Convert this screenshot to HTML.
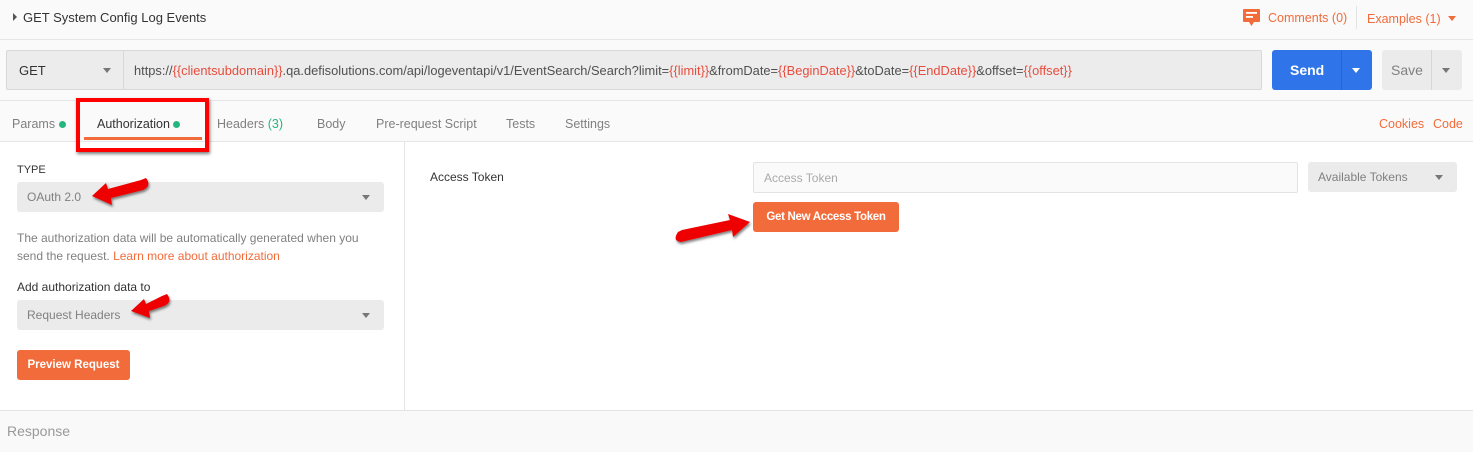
<!DOCTYPE html>
<html><head><style>
*{margin:0;padding:0;box-sizing:border-box}
body{width:1473px;height:452px;overflow:hidden;background:#fff;font-family:"Liberation Sans",sans-serif;font-size:12px;color:#505050;position:relative}
.a{position:absolute}
.or{color:#f26b3a}
.sel{background:#ebebeb;border-radius:3px;color:#808080}
.tri{width:0;height:0;border-left:4px solid transparent;border-right:4px solid transparent;border-top:5px solid #777;position:absolute}
.tab{position:absolute;top:117px;color:#808080;font-size:12.5px}
</style></head><body>
<div class="a" style="left:0;top:0;width:1473px;height:40px;background:#fafafa;border-bottom:1px solid #e6e6e6"></div>
<div class="a" style="left:13px;top:13px;width:0;height:0;border-top:4px solid transparent;border-bottom:4px solid transparent;border-left:4px solid #555"></div>
<div class="a" style="left:23px;top:10px;font-size:13px;color:#333">GET System Config Log Events</div>
<svg class="a" style="left:1243px;top:9px" width="17" height="18"><rect x="0" y="0" width="17" height="13" rx="1" fill="#f26b3a"/><path d="M6 13 L8.5 17 L11 13Z" fill="#f26b3a"/><rect x="3" y="3" width="11" height="1.8" fill="#fff"/><rect x="3" y="7" width="7" height="1.8" fill="#fff"/></svg>
<div class="a or" style="left:1268px;top:11px;font-size:12.5px">Comments (0)</div>
<div class="a" style="left:1356px;top:6px;width:1px;height:23px;background:#e3e3e3"></div>
<div class="a or" style="left:1367px;top:12px;font-size:12.5px">Examples (1)</div>
<div class="a" style="left:1448px;top:16px;border-left:4px solid transparent;border-right:4px solid transparent;border-top:5px solid #f26b3a"></div>

<div class="a" style="left:0;top:40px;width:1473px;height:61px;background:#fafafa;border-bottom:1px solid #e6e6e6"></div>
<div class="a" style="left:6px;top:50px;width:1256px;height:40px;background:#ececec;border:1px solid #d8d8d8;border-radius:2px"></div>
<div class="a" style="left:123px;top:51px;width:1px;height:38px;background:#d8d8d8"></div>
<div class="a" style="left:19px;top:63px;font-size:13px;color:#333">GET</div>
<div class="tri" style="left:103px;top:68px"></div>
<div class="a" style="left:134px;top:63px;color:#505050;font-size:12.85px">https://<span style="color:#e84c3d">{{clientsubdomain}}</span>.qa.defisolutions.com/api/logeventapi/v1/EventSearch/Search?limit=<span style="color:#e84c3d">{{limit}}</span>&amp;fromDate=<span style="color:#e84c3d">{{BeginDate}}</span>&amp;toDate=<span style="color:#e84c3d">{{EndDate}}</span>&amp;offset=<span style="color:#e84c3d">{{offset}}</span></div>
<div class="a" style="left:1272px;top:50px;width:100px;height:40px;background:#2f74e8;border-radius:3px"></div>
<div class="a" style="left:1341px;top:50px;width:1px;height:40px;background:#2766cf"></div>
<div class="a" style="left:1290px;top:62px;color:#fff;font-weight:bold;font-size:14px">Send</div>
<div class="a" style="left:1352px;top:68px;border-left:4px solid transparent;border-right:4px solid transparent;border-top:5px solid #fff"></div>
<div class="a" style="left:1382px;top:50px;width:80px;height:40px;background:#ebebeb;border-radius:3px"></div>
<div class="a" style="left:1431px;top:50px;width:1px;height:40px;background:#d6d6d6"></div>
<div class="a" style="left:1391px;top:62px;color:#808080;font-size:14px">Save</div>
<div class="tri" style="left:1442px;top:68px"></div>

<div class="a" style="left:0;top:101px;width:1473px;height:41px;background:#fafafa;border-bottom:1px solid #e6e6e6"></div>
<div class="tab" style="left:12px">Params <span style="display:inline-block;width:7px;height:7px;border-radius:50%;background:#26b47f"></span></div>
<div class="tab" style="left:97px;color:#333">Authorization <span style="display:inline-block;width:7px;height:7px;border-radius:50%;background:#26b47f"></span></div>
<div class="a" style="left:84px;top:137px;width:118px;height:3px;background:#f26b3a"></div>
<div class="tab" style="left:217px">Headers <span style="color:#26b47f">(3)</span></div>
<div class="tab" style="left:317px">Body</div>
<div class="tab" style="left:376px">Pre-request Script</div>
<div class="tab" style="left:506px">Tests</div>
<div class="tab" style="left:565px">Settings</div>
<div class="a or" style="left:1379px;top:117px;font-size:12.5px">Cookies</div>
<div class="a or" style="left:1433px;top:117px;font-size:12.5px">Code</div>
<div class="a" style="left:76px;top:98px;width:133px;height:54px;border:4px solid #ff0000;box-shadow:1px 2px 3px rgba(0,0,0,.5)"></div>

<div class="a" style="left:404px;top:142px;width:1px;height:268px;background:#e6e6e6"></div>
<div class="a" style="left:17px;top:164px;font-size:11px;color:#333">TYPE</div>
<div class="a sel" style="left:17px;top:182px;width:367px;height:30px"></div>
<div class="a" style="left:27px;top:190px;color:#808080">OAuth 2.0</div>
<div class="tri" style="left:362px;top:195px"></div>
<div class="a" style="left:17px;top:229px;line-height:18px;color:#808080;width:370px">The authorization data will be automatically generated when you send the request. <span class="or">Learn more about authorization</span></div>
<div class="a" style="left:17px;top:280px;color:#333">Add authorization data to</div>
<div class="a sel" style="left:17px;top:300px;width:367px;height:30px"></div>
<div class="a" style="left:27px;top:308px;color:#808080">Request Headers</div>
<div class="tri" style="left:362px;top:313px"></div>
<div class="a" style="left:17px;top:350px;width:113px;height:30px;background:#f26b3a;border-radius:3px;color:#fff;font-weight:bold;font-size:11.5px;text-align:center;line-height:30px">Preview Request</div>

<div class="a" style="left:430px;top:170px;color:#333">Access Token</div>
<div class="a" style="left:753px;top:162px;width:545px;height:31px;background:#fafafa;border:1px solid #e3e3e3;border-radius:2px"></div>
<div class="a" style="left:764px;top:171px;color:#aaa">Access Token</div>
<div class="a sel" style="left:1308px;top:162px;width:149px;height:30px"></div>
<div class="a" style="left:1318px;top:170px;color:#808080">Available Tokens</div>
<div class="tri" style="left:1435px;top:175px"></div>
<div class="a" style="left:753px;top:202px;width:146px;height:30px;background:#f26b3a;border-radius:3px;color:#fff;font-size:11.5px;text-align:center;line-height:30px;font-weight:bold;letter-spacing:-0.3px">Get New Access Token</div>

<div class="a" style="left:0;top:410px;width:1473px;height:42px;background:#f9f9f9;border-top:1px solid #e3e3e3"></div>
<div class="a" style="left:7px;top:423px;font-size:14px;color:#999">Response</div>

<svg class="a" style="left:0;top:0" width="1473" height="452">
<defs><filter id="s"><feDropShadow dx="1" dy="2" stdDeviation="1.2" flood-opacity=".5"/></filter></defs>
<g fill="#ee0000" filter="url(#s)">
<path d="M146 178 Q152 186 143 190 L111 198 L112 205 L92 196 L106 183 L108 189 L141 180Z"/>
<path d="M167 294 Q173 302 164 306 L149 311 L150 318 L131 311 L144 299 L146 304 L162 296Z"/>
<path d="M678 232 Q672 241 681 242 L732 230 L733 237 L750 222 L728 214 L730 220 L682 230Z"/>
</g></svg>
</body></html>
